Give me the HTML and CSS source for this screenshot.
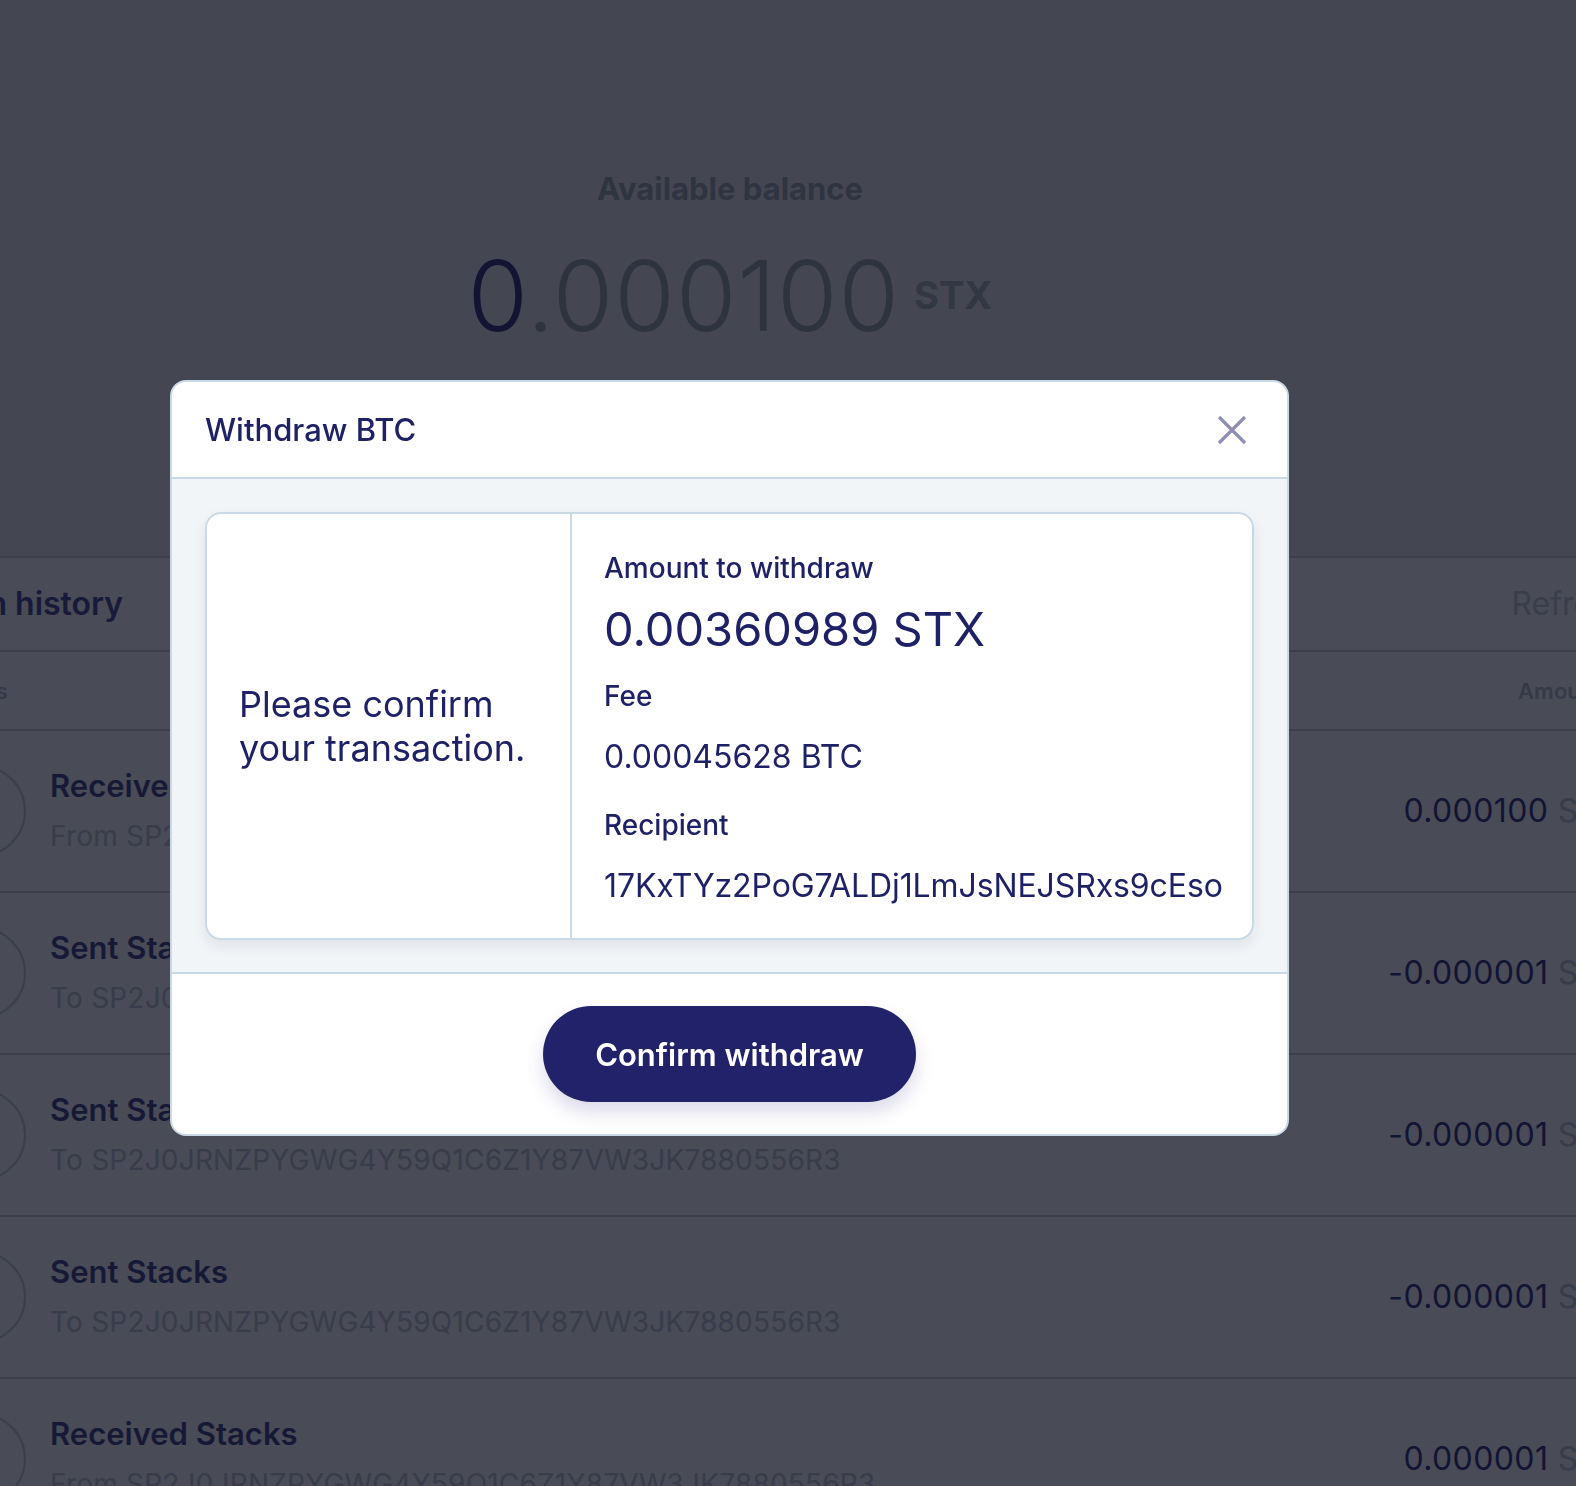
FILE: index.html
```html
<!DOCTYPE html>
<html lang="en">
<head>
    <meta charset="UTF-8">
    <meta name="viewport" content="width=device-width, initial-scale=1.0">
    <title>Withdraw BTC</title>
    <link rel="stylesheet" href="styles.css">
</head>
<body>
    <div class="page">
        <section class="balance">
            <div class="balance-label">Available balance</div>
            <div class="balance-amount">
                <span class="balance-number"><span class="whole">0</span>.000100</span>
                <span class="balance-unit">STX</span>
            </div>
        </section>

        <section class="history">
            <div class="history-head">
                <h2>Transaction history</h2>
                <span class="refresh">Refresh</span>
            </div>
            <div class="history-cols">
                <span>Transactions</span>
                <span>Amount</span>
            </div>

            <div class="tx-row">
                <div class="tx-icon"></div>
                <div class="tx-info">
                    <div class="tx-title">Received Stacks</div>
                    <div class="tx-sub">From SP2J0JRNZPYGWG4Y59Q1C6Z1Y87VW3JK7880556R3</div>
                </div>
                <div class="tx-amount">0.000100 <span>STX</span></div>
            </div>
            <div class="tx-row">
                <div class="tx-icon"></div>
                <div class="tx-info">
                    <div class="tx-title">Sent Stacks</div>
                    <div class="tx-sub">To SP2J0JRNZPYGWG4Y59Q1C6Z1Y87VW3JK7880556R3</div>
                </div>
                <div class="tx-amount">-0.000001 <span>STX</span></div>
            </div>
            <div class="tx-row">
                <div class="tx-icon"></div>
                <div class="tx-info">
                    <div class="tx-title">Sent Stacks</div>
                    <div class="tx-sub">To SP2J0JRNZPYGWG4Y59Q1C6Z1Y87VW3JK7880556R3</div>
                </div>
                <div class="tx-amount">-0.000001 <span>STX</span></div>
            </div>
            <div class="tx-row">
                <div class="tx-icon"></div>
                <div class="tx-info">
                    <div class="tx-title">Sent Stacks</div>
                    <div class="tx-sub">To SP2J0JRNZPYGWG4Y59Q1C6Z1Y87VW3JK7880556R3</div>
                </div>
                <div class="tx-amount">-0.000001 <span>STX</span></div>
            </div>
            <div class="tx-row">
                <div class="tx-icon"></div>
                <div class="tx-info">
                    <div class="tx-title">Received Stacks</div>
                    <div class="tx-sub">From SP2J0JRNZPYGWG4Y59Q1C6Z1Y87VW3JK7880556R3</div>
                </div>
                <div class="tx-amount">0.000001 <span>STX</span></div>
            </div>
        </section>
    </div>

    <div class="modal">
        <div class="modal-header">
            <h1>Withdraw BTC</h1>
            <button class="close-btn" type="button" aria-label="Close">
                <svg width="30" height="30" viewBox="0 0 30 30">
                    <path d="M2 2 L28 28 M28 2 L2 28" stroke="currentColor" stroke-width="3.2" fill="none"/>
                </svg>
            </button>
        </div>

        <div class="modal-body">
            <div class="confirm-card">
                <div class="confirm-note">Please confirm your transaction.</div>
                <div class="confirm-details">
                    <div class="field-label">Amount to withdraw</div>
                    <div class="field-amount">0.00360989 STX</div>
                    <div class="field-label fee-label">Fee</div>
                    <div class="field-value">0.00045628 BTC</div>
                    <div class="field-label recipient-label">Recipient</div>
                    <div class="field-value address">17KxTYz2PoG7ALDj1LmJsNEJSRxs9cEso</div>
                </div>
            </div>
        </div>

        <div class="modal-footer">
            <button class="confirm-btn" type="button">Confirm withdraw</button>
        </div>
    </div>
</body>
</html>
```

FILE: styles.css
```css
/* Page behind the dialog (already dimmed) */
body {
    margin: 0;
    font-family: Inter, "Noto Sans", sans-serif;
    background: #444652;
    height: 1486px;
    overflow: hidden;
}

.page {
    width: 1460px;
}

/* Balance */
.balance {
    height: 556px;
    padding-top: 171px;
    box-sizing: border-box;
    text-align: center;
}

.balance-label {
    font-size: 31px;
    line-height: 36px;
    font-weight: 700;
    color: #2f3441;
}

.balance-amount {
    display: flex;
    justify-content: center;
    align-items: flex-start;
    gap: 14px;
    margin-top: 33px;
}

.balance-number {
    font-size: 98px;
    line-height: 112px;
    font-weight: 300;
    letter-spacing: 1px;
    color: #2e3340;
}

.balance-number .whole {
    color: #131432;
}

.balance-unit {
    margin-top: 36px;
    font-size: 38px;
    line-height: 38px;
    font-weight: 700;
    color: #323744;
}

/* Transaction history */
.history {
    margin-left: -66px;
    width: 1694px;
    background: #494b56;
    border-top: 2px solid #3c3f4b;
}

.history-head {
    display: flex;
    justify-content: space-between;
    align-items: center;
    height: 92px;
    border-bottom: 2px solid #3c3f4b;
}

.history-head h2 {
    margin: 0 0 0 -110px;
    font-size: 32px;
    line-height: 40px;
    font-weight: 600;
    color: #171a38;
}

.refresh {
    font-size: 32px;
    line-height: 40px;
    color: #3a3e4c;
}

.history-cols {
    display: flex;
    justify-content: space-between;
    align-items: center;
    height: 77px;
    padding-right: 26px;
    border-bottom: 2px solid #3c3f4b;
    font-size: 22px;
    font-weight: 600;
    color: #363a48;
}

.history-cols span:first-child {
    margin-left: -64px;
}

.tx-row {
    display: flex;
    align-items: center;
    gap: 24px;
    height: 160px;
    padding-right: 6px;
    border-bottom: 2px solid #3c3f4b;
}

.tx-icon {
    width: 88px;
    height: 88px;
    border: 2px solid #3b3f4d;
    border-radius: 50%;
    flex-shrink: 0;
}

.tx-info {
    flex: 1;
}

.tx-title {
    font-size: 31px;
    line-height: 40px;
    font-weight: 600;
    color: #161936;
}

.tx-sub {
    margin-top: 10px;
    font-size: 28px;
    line-height: 40px;
    letter-spacing: 0.2px;
    color: #383c4b;
}

.tx-amount {
    font-size: 32px;
    line-height: 40px;
    letter-spacing: 0.4px;
    color: #121433;
}

.tx-amount span {
    color: #383c4b;
}

/* Modal */
.modal {
    position: fixed;
    top: 380px;
    left: 170px;
    width: 1119px;
    box-sizing: border-box;
    background: #ffffff;
    border: 2px solid #c9d9e5;
    border-radius: 16px;
    overflow: hidden;
    color: #1f2167;
}

.modal-header {
    display: flex;
    justify-content: space-between;
    align-items: center;
    height: 95px;
    padding: 0 40px 0 33px;
    border-bottom: 2px solid #c9d9e5;
}

.modal-header h1 {
    margin: 0;
    font-size: 31px;
    line-height: 40px;
    font-weight: 500;
}

.close-btn {
    padding: 0;
    border: none;
    background: none;
    color: #8c8eb3;
    cursor: pointer;
    display: flex;
}

.modal-body {
    background: #f1f5f8;
    padding: 33px 33px 32px;
    border-bottom: 2px solid #c9d9e5;
}

.confirm-card {
    display: grid;
    grid-template-columns: 365px 1fr;
    background: #ffffff;
    border: 2px solid #c9d9e5;
    border-radius: 16px;
    box-shadow: 0 6px 14px rgba(20, 30, 60, 0.08);
}

.confirm-note {
    display: flex;
    align-items: center;
    padding: 0 32px;
    border-right: 2px solid #c9d9e5;
    font-size: 36px;
    line-height: 44px;
}

.confirm-details {
    padding: 36px 32px 32px;
}

.field-label {
    font-size: 28px;
    line-height: 36px;
    font-weight: 500;
}

.field-amount {
    margin-top: 15px;
    font-size: 47px;
    line-height: 56px;
}

.fee-label {
    margin-top: 21px;
}

.recipient-label {
    margin-top: 30px;
}

.field-value {
    margin-top: 23px;
    font-size: 32px;
    line-height: 40px;
}

.address {
    letter-spacing: -0.1px;
}

.modal-footer {
    display: flex;
    justify-content: center;
    align-items: center;
    height: 160px;
}

.confirm-btn {
    height: 96px;
    padding: 0 52px;
    border: none;
    border-radius: 48px;
    background: #21226a;
    color: #ffffff;
    font-family: inherit;
    font-size: 31px;
    font-weight: 600;
    box-shadow: 0 10px 18px rgba(60, 50, 140, 0.18);
    cursor: pointer;
}
```
